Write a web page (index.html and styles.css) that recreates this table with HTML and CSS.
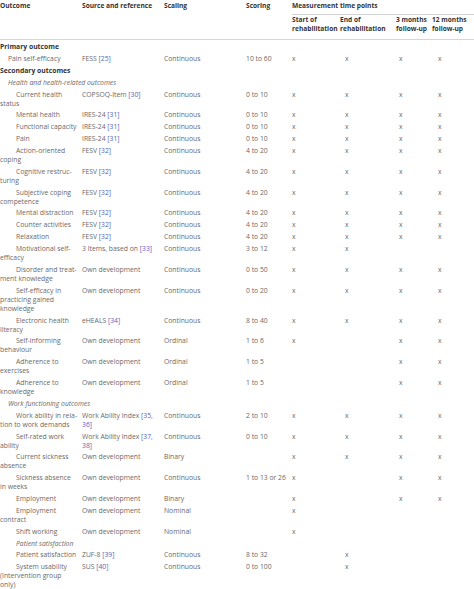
FILE: index.html
```html
<!DOCTYPE html>
<html lang="en">
<head>
<meta charset="utf-8">
<title>Outcomes and measurement time points</title>
<link rel="stylesheet" href="styles.css">
</head>
<body>
<table class="tbl">
  <colgroup>
    <col class="c-out"><col class="c-src"><col class="c-scl"><col class="c-sco">
    <col class="c-t1"><col class="c-t2"><col class="c-t3"><col class="c-t4">
  </colgroup>
  <thead>
    <tr class="h1">
      <th rowspan="2">Outcome</th>
      <th rowspan="2">Source and reference</th>
      <th rowspan="2">Scaling</th>
      <th rowspan="2">Scoring</th>
      <th colspan="4" class="mtp">Measurement time points</th>
    </tr>
    <tr class="h2">
      <th>Start of<br>rehabilitation</th>
      <th>End of<br>rehabilitation</th>
      <th>3 months<br>follow-up</th>
      <th>12 months<br>follow-up</th>
    </tr>
  </thead>
  <tbody>
    <tr><td colspan="8" class="grp">Primary outcome</td></tr>
    <tr><td class="i1">Pain self-efficacy</td><td>FESS <span class="ref">[25]</span></td><td>Continuous</td><td>10 to 60</td><td>x</td><td>x</td><td>x</td><td>x</td></tr>
    <tr><td colspan="8" class="grp">Secondary outcomes</td></tr>
    <tr><td colspan="8" class="sub i1">Health and health-related outcomes</td></tr>
    <tr><td class="i2">Current health<br>status</td><td>COPSOQ-Item <span class="ref">[30]</span></td><td>Continuous</td><td>0 to 10</td><td>x</td><td>x</td><td>x</td><td>x</td></tr>
    <tr><td class="i2">Mental health</td><td>IRES-24 <span class="ref">[31]</span></td><td>Continuous</td><td>0 to 10</td><td>x</td><td>x</td><td>x</td><td>x</td></tr>
    <tr><td class="i2">Functional capacity</td><td>IRES-24 <span class="ref">[31]</span></td><td>Continuous</td><td>0 to 10</td><td>x</td><td>x</td><td>x</td><td>x</td></tr>
    <tr><td class="i2">Pain</td><td>IRES-24 <span class="ref">[31]</span></td><td>Continuous</td><td>0 to 10</td><td>x</td><td>x</td><td>x</td><td>x</td></tr>
    <tr><td class="i2">Action-oriented<br>coping</td><td>FESV <span class="ref">[32]</span></td><td>Continuous</td><td>4 to 20</td><td>x</td><td>x</td><td>x</td><td>x</td></tr>
    <tr><td class="i2">Cognitive restruc-<br>turing</td><td>FESV <span class="ref">[32]</span></td><td>Continuous</td><td>4 to 20</td><td>x</td><td>x</td><td>x</td><td>x</td></tr>
    <tr><td class="i2">Subjective coping<br>competence</td><td>FESV <span class="ref">[32]</span></td><td>Continuous</td><td>4 to 20</td><td>x</td><td>x</td><td>x</td><td>x</td></tr>
    <tr><td class="i2">Mental distraction</td><td>FESV <span class="ref">[32]</span></td><td>Continuous</td><td>4 to 20</td><td>x</td><td>x</td><td>x</td><td>x</td></tr>
    <tr><td class="i2">Counter activities</td><td>FESV <span class="ref">[32]</span></td><td>Continuous</td><td>4 to 20</td><td>x</td><td>x</td><td>x</td><td>x</td></tr>
    <tr><td class="i2">Relaxation</td><td>FESV <span class="ref">[32]</span></td><td>Continuous</td><td>4 to 20</td><td>x</td><td>x</td><td>x</td><td>x</td></tr>
    <tr><td class="i2">Motivational self-<br>efficacy</td><td>3 Items, based on <span class="ref">[33]</span></td><td>Continuous</td><td>3 to 12</td><td>x</td><td>x</td><td></td><td></td></tr>
    <tr><td class="i2">Disorder and treat-<br>ment knowledge</td><td>Own development</td><td>Continuous</td><td>0 to 50</td><td>x</td><td>x</td><td>x</td><td>x</td></tr>
    <tr><td class="i2">Self-efficacy in<br>practicing gained<br>knowledge</td><td>Own development</td><td>Continuous</td><td>0 to 20</td><td>x</td><td>x</td><td>x</td><td>x</td></tr>
    <tr><td class="i2">Electronic health<br>literacy</td><td>eHEALS <span class="ref">[34]</span></td><td>Continuous</td><td>8 to 40</td><td>x</td><td>x</td><td>x</td><td>x</td></tr>
    <tr><td class="i2">Self-informing<br>behaviour</td><td>Own development</td><td>Ordinal</td><td>1 to 6</td><td>x</td><td></td><td>x</td><td>x</td></tr>
    <tr><td class="i2">Adherence to<br>exercises</td><td>Own development</td><td>Ordinal</td><td>1 to 5</td><td></td><td></td><td>x</td><td>x</td></tr>
    <tr><td class="i2">Adherence to<br>knowledge</td><td>Own development</td><td>Ordinal</td><td>1 to 5</td><td></td><td></td><td>x</td><td>x</td></tr>
    <tr><td colspan="8" class="sub i1">Work functioning outcomes</td></tr>
    <tr><td class="i2">Work ability in rela-<br>tion to work demands</td><td>Work Ability Index <span class="ref">[35,<br>36]</span></td><td>Continuous</td><td>2 to 10</td><td>x</td><td>x</td><td>x</td><td>x</td></tr>
    <tr><td class="i2">Self-rated work<br>ability</td><td>Work Ability Index <span class="ref">[37,<br>38]</span></td><td>Continuous</td><td>0 to 10</td><td>x</td><td>x</td><td>x</td><td>x</td></tr>
    <tr><td class="i2">Current sickness<br>absence</td><td>Own development</td><td>Binary</td><td></td><td>x</td><td>x</td><td>x</td><td>x</td></tr>
    <tr><td class="i2">Sickness absence<br>in weeks</td><td>Own development</td><td>Continuous</td><td>1 to 13 or 26</td><td>x</td><td></td><td>x</td><td>x</td></tr>
    <tr><td class="i2">Employment</td><td>Own development</td><td>Binary</td><td></td><td>x</td><td></td><td>x</td><td>x</td></tr>
    <tr><td class="i2">Employment<br>contract</td><td>Own development</td><td>Nominal</td><td></td><td>x</td><td></td><td></td><td></td></tr>
    <tr><td class="i2">Shift working</td><td>Own development</td><td>Nominal</td><td></td><td>x</td><td></td><td></td><td></td></tr>
    <tr><td colspan="8" class="sub i2">Patient satisfaction</td></tr>
    <tr><td class="i2">Patient satisfaction</td><td>ZUF-8 <span class="ref">[39]</span></td><td>Continuous</td><td>8 to 32</td><td></td><td>x</td><td></td><td></td></tr>
    <tr><td class="i2">System usability<br>(Intervention group<br>only)</td><td>SUS <span class="ref">[40]</span></td><td>Continuous</td><td>0 to 100</td><td></td><td>x</td><td></td><td></td></tr>
  </tbody>
</table>
</body>
</html>
```

FILE: styles.css
```css
html, body {
  margin: 0;
  padding: 0;
  background: #ffffff;
}

body {
  font-family: "Open Sans", "Noto Sans", sans-serif;
  font-size: 6.8px;
  color: #6a6a6a;
}

.tbl {
  border-collapse: collapse;
  table-layout: fixed;
  width: 474px;
}

.c-out { width: 82px; }
.c-src { width: 82px; }
.c-scl { width: 82px; }
.c-sco { width: 46px; }
.c-t1 { width: 48px; }
.c-t2 { width: 56px; }
.c-t3 { width: 36px; }
.c-t4 { width: 42px; }

th {
  font-size: 6.6px;
  font-weight: 700;
  color: #333333;
  text-align: left;
  vertical-align: top;
  padding: 0;
  white-space: nowrap;
  border-bottom: 1px solid #d6d6d6;
}

.h1 th {
  padding-top: 1.2px;
  line-height: 9px;
}

.h1 th.mtp {
  padding-bottom: 3.8px;
  border-bottom: 1px solid #d2d2d2;
}

.h2 th {
  line-height: 8.7px;
  padding-top: 1.35px;
  padding-bottom: 5.25px;
}

td {
  padding: 1.425px 0;
  line-height: 9px;
  vertical-align: top;
  white-space: nowrap;
}

tbody tr:first-child td {
  padding-top: 2.2px;
}

td:nth-child(6) { padding-left: 5px; }
td:nth-child(7) { padding-left: 3px; }
td:nth-child(8) { padding-left: 6px; }

.grp {
  font-weight: 700;
  color: #333333;
}

.sub {
  font-style: italic;
}

.i1 { text-indent: 8px; }
.i2 { text-indent: 16px; }

.ref {
  color: #5e62b8;
}
```
